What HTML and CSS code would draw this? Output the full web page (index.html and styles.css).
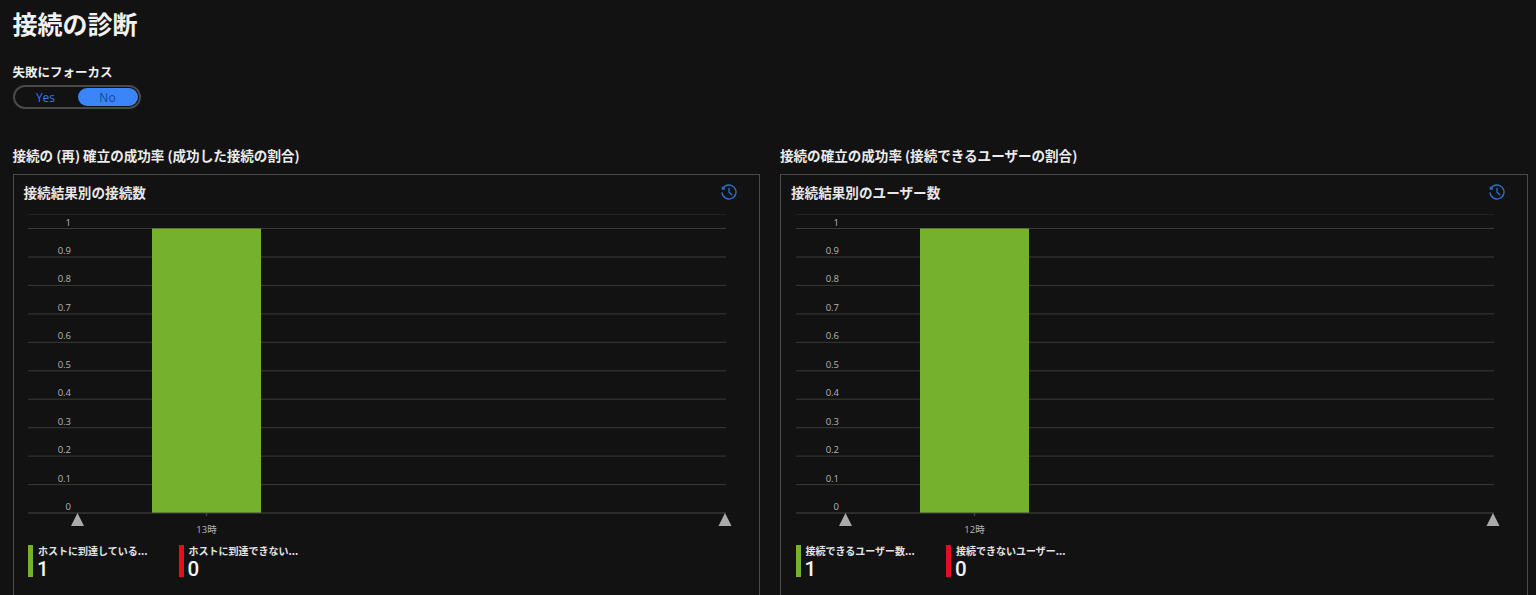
FILE: index.html
```html
<!DOCTYPE html>
<html lang="ja">
<head>
<meta charset="utf-8">
<title>接続の診断</title>
<link rel="stylesheet" href="styles.css">
</head>
<body>
<main class="page">
  <h1 class="page-title">接続の診断</h1>
  <div class="filter">
    <div class="filter-label">失敗にフォーカス</div>
    <div class="toggle">
      <span class="toggle-item">Yes</span>
      <span class="toggle-item is-on">No</span>
    </div>
  </div>
  <div class="columns">
    <section class="column">
      <h2 class="section-title">接続の (再) 確立の成功率 (成功した接続の割合)</h2>
      <div class="panel">
        <div class="panel-head">
          <h3 class="panel-title">接続結果別の接続数</h3>
          <svg class="history" viewBox="0 0 18 18"><path d="M3.1 5.200A7 7 0 1 1 2 9.400"/><path class="history-head" d="M1.700 3.300 2 7.100 5.700 6.200Z"/><path d="M9 4.800V9.300L12.200 12.200"/></svg>
        </div>
        <svg class="chart" viewBox="0 0 712 326">
          <g class="grid">
            <path class="faint" d="M0 .5H698"/>
            <path d="M0 14.500H698M0 43H698M0 71.400H698M0 99.900H698M0 128.300H698M0 156.800H698M0 185.200H698M0 213.700H698M0 242.100H698M0 270.600H698"/>
          </g>
          <g class="ylabels">
            <text x="43" y="11.500">1</text><text x="43" y="40">0.9</text><text x="43" y="68.400">0.8</text><text x="43" y="96.900">0.7</text><text x="43" y="125.300">0.6</text><text x="43" y="153.800">0.5</text><text x="43" y="182.200">0.4</text><text x="43" y="210.700">0.3</text><text x="43" y="239.100">0.2</text><text x="43" y="267.600">0.1</text><text x="43" y="296">0</text>
          </g>
          <rect class="bar" x="124" y="14.500" width="109" height="284.500"/>
          <path class="axis" d="M0 299H698M178.500 299V302"/>
          <path class="handle" d="M49.500 299 56 312H43Z"/>
          <path class="handle" d="M697 299 703.500 312H690.500Z"/>
          <text class="xlabel" x="178.500" y="319">13時</text>
        </svg>
        <div class="legend">
          <div class="legend-item"><span class="swatch ok"></span><div><div class="legend-label">ホストに到達している...</div><div class="legend-value">1</div></div></div>
          <div class="legend-item"><span class="swatch bad"></span><div><div class="legend-label">ホストに到達できない...</div><div class="legend-value">0</div></div></div>
        </div>
      </div>
    </section>
    <section class="column">
      <h2 class="section-title">接続の確立の成功率 (接続できるユーザーの割合)</h2>
      <div class="panel">
        <div class="panel-head">
          <h3 class="panel-title">接続結果別のユーザー数</h3>
          <svg class="history" viewBox="0 0 18 18"><path d="M3.1 5.200A7 7 0 1 1 2 9.400"/><path class="history-head" d="M1.700 3.300 2 7.100 5.700 6.200Z"/><path d="M9 4.800V9.300L12.200 12.200"/></svg>
        </div>
        <svg class="chart" viewBox="0 0 712 326">
          <g class="grid">
            <path class="faint" d="M0 .5H698"/>
            <path d="M0 14.500H698M0 43H698M0 71.400H698M0 99.900H698M0 128.300H698M0 156.800H698M0 185.200H698M0 213.700H698M0 242.100H698M0 270.600H698"/>
          </g>
          <g class="ylabels">
            <text x="43" y="11.500">1</text><text x="43" y="40">0.9</text><text x="43" y="68.400">0.8</text><text x="43" y="96.900">0.7</text><text x="43" y="125.300">0.6</text><text x="43" y="153.800">0.5</text><text x="43" y="182.200">0.4</text><text x="43" y="210.700">0.3</text><text x="43" y="239.100">0.2</text><text x="43" y="267.600">0.1</text><text x="43" y="296">0</text>
          </g>
          <rect class="bar" x="124" y="14.500" width="109" height="284.500"/>
          <path class="axis" d="M0 299H698M178.500 299V302"/>
          <path class="handle" d="M49.500 299 56 312H43Z"/>
          <path class="handle" d="M697 299 703.500 312H690.500Z"/>
          <text class="xlabel" x="178.500" y="319">12時</text>
        </svg>
        <div class="legend">
          <div class="legend-item"><span class="swatch ok"></span><div><div class="legend-label">接続できるユーザー数...</div><div class="legend-value">1</div></div></div>
          <div class="legend-item"><span class="swatch bad"></span><div><div class="legend-label">接続できないユーザー...</div><div class="legend-value">0</div></div></div>
        </div>
      </div>
    </section>
  </div>
</main>
</body>
</html>
```
FILE: styles.css
```css
* { box-sizing: border-box; }
html, body { margin: 0; height: 100%; overflow: hidden; background: #121212; }
body { font-family: "Noto Sans CJK JP", "Noto Sans", sans-serif; color: #f0f0f0; }
.page { padding: 6px 8px 0 12.5px; }
.page-title { margin: 0; font-size: 25px; line-height: 34px; font-weight: 700; color: #f2f2f2; }
.filter { margin-top: 23px; }
.filter-label { font-size: 12.5px; line-height: 18px; font-weight: 700; }
.toggle { display: flex; align-items: center; justify-content: space-between; width: 128px; height: 24px; margin-top: 4px; padding: 0 1px; border: 2px solid #4a4a4a; border-radius: 12px; }
.toggle-item { width: 60px; height: 18px; border-radius: 9px; text-align: center; font-family: "Open Sans", sans-serif; font-size: 12px; font-weight: 500; line-height: 20px; color: #2f7bf0; }
.toggle-item.is-on { background: #3a85fa; color: #154595; }
.columns { display: grid; grid-template-columns: 747.5px 748px; column-gap: 20px; margin-top: 36px; }
.section-title { margin: 0 0 9px; font-size: 13.55px; line-height: 20px; font-weight: 700; color: #ececec; white-space: nowrap; }
.panel { height: 430px; border: 1.5px solid #4a4a4a; padding: 0 0 0 10px; }
.panel-head { display: flex; justify-content: space-between; align-items: center; height: 33px; padding-right: 21px; }
.panel-title { margin: 0; font-size: 13.6px; line-height: 32px; font-weight: 700; color: #e8e8e8; }
.history { width: 18px; height: 18px; fill: none; stroke: #2c6fd1; stroke-width: 1.3; }
.history-head { fill: #2c6fd1; stroke: none; }
.chart { display: block; width: 712px; height: 326px; margin: 6px 0 0 4.5px; }
.grid path { stroke: #3a3a3a; stroke-width: 1; fill: none; }
.grid .faint { stroke: #222; }
.ylabels text { font-family: "Open Sans", sans-serif; font-size: 9.5px; fill: #b4b4b4; text-anchor: end; }
.bar { fill: #75b12c; }
.axis { stroke: #474747; stroke-width: 1.2; fill: none; }
.handle { fill: #ababab; }
.xlabel { font-family: "Open Sans", "Noto Sans CJK JP", sans-serif; font-size: 9.5px; fill: #b4b4b4; text-anchor: middle; }
.legend { display: flex; gap: 30px; margin: 5px 0 0 4.5px; }
.legend-item { display: flex; gap: 5px; width: 120.500px; }
.swatch { flex: none; width: 5px; height: 32px; }
.swatch.ok { background: #75b12c; }
.swatch.bad { background: #e2101f; }
.legend-label { margin-top: -1.5px; font-size: 10px; line-height: 13px; font-weight: 700; color: #e4e4e4; white-space: nowrap; }
.legend-value { margin-top: 2px; margin-left: -1px; font-family: Roboto, sans-serif; font-size: 20.5px; line-height: 20px; font-weight: 500; color: #f6f6f6; }
```
